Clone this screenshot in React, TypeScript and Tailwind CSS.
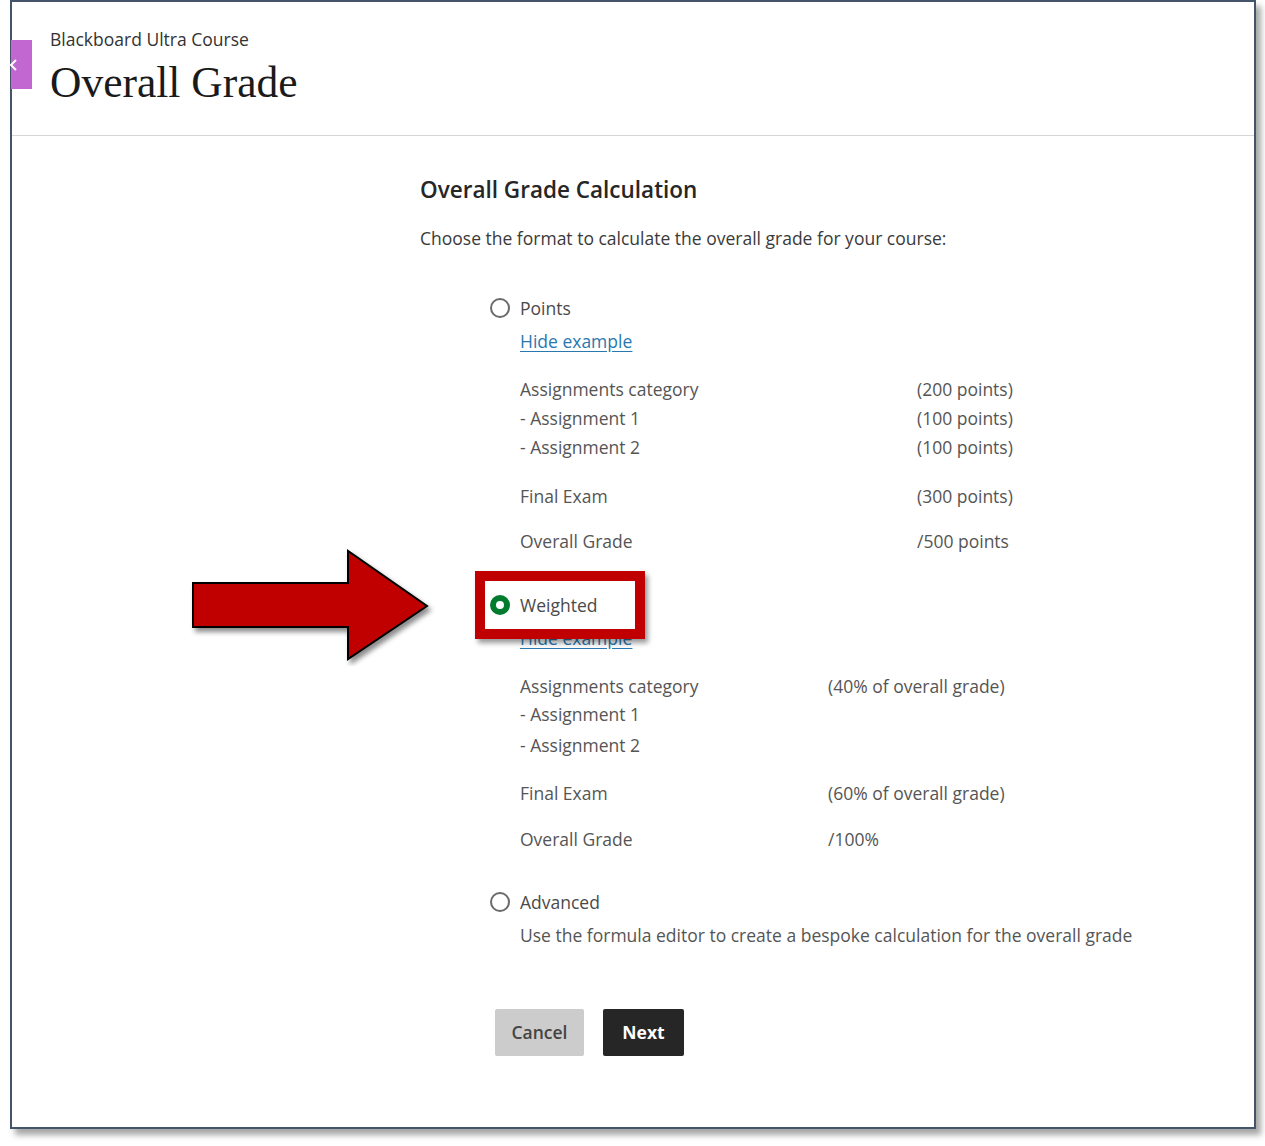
import React from "react";

const sans = "font-['Open_Sans','Noto_Sans',sans-serif]";

function Radio({ checked }: { checked?: boolean }) {
  if (checked) {
    return (
      <span className="inline-block w-[20px] h-[20px] rounded-full border-[6px] border-[#037b2f] bg-white box-border" />
    );
  }
  return (
    <span className="inline-block w-[20px] h-[20px] rounded-full border-2 border-[#6b6b6b] bg-white box-border" />
  );
}

function Row({ left, right, rightX, className = "" }: { left: string; right?: string; rightX: string; className?: string }) {
  return (
    <div className={`flex h-[28px] items-center ${className}`}>
      <span className={`${rightX} shrink-0`}>{left}</span>
      {right && <span>{right}</span>}
    </div>
  );
}

export default function App() {
  return (
    <div className={`${sans} bg-white w-[1265px] h-[1146px] pl-[10px]`}>
      <div className="relative w-[1246px] h-[1129px] border-2 border-[#44546a] bg-white shadow-[5px_6px_6px_rgba(0,0,0,0.35)]">
        {/* header */}
        <div className="h-[134px] border-b border-[#d6d6d6] flex">
          <div className="w-[21px] h-[49px] mt-[38px] -ml-[1px] bg-[#c266d1] flex items-center">
            <svg width="8" height="14" viewBox="0 0 8 14" className="ml-[-1px]">
              <path d="M6 2 L1 7 L6 12" stroke="#fff" strokeWidth="2" fill="none" />
            </svg>
          </div>
          <div className="ml-[18px]">
            <div className="mt-[26px] text-[17.5px] leading-[22px] text-[#333]">Blackboard Ultra Course</div>
            <div className="mt-[8px] text-[43.5px] leading-[48px] text-[#1a1a1a] font-['Liberation_Serif','Noto_Serif',serif]">
              Overall Grade
            </div>
          </div>
        </div>

        {/* body */}
        <div className="pl-[408px] text-[#333] text-[17.5px]">
          <div className="mt-[39px] text-[22.5px] leading-[30px] font-semibold text-[#262626]">Overall Grade Calculation</div>
          <div className="mt-[20px] leading-[26px] text-[#3a3a3a]">
            Choose the format to calculate the overall grade for your course:
          </div>

          {/* Points */}
          <div className="ml-[70px] mt-[44px]">
            <div className="flex items-center h-[26px] gap-[10px]">
              <Radio />
              <span className="text-[#4a4a4a]">Points</span>
            </div>
            <div className="ml-[30px] text-[#555]">
              <div className="mt-[7px] h-[26px] leading-[26px] text-[#2a78b0] underline underline-offset-[3px]">
                <a href="#">Hide example</a>
              </div>
              <div className="mt-[21px]">
                <Row left="Assignments category" right="(200 points)" rightX="w-[397px]" />
                <Row left="- Assignment 1" right="(100 points)" rightX="w-[397px]" className="mt-[1px]" />
                <Row left="- Assignment 2" right="(100 points)" rightX="w-[397px]" className="mt-[1px]" />
                <Row left="Final Exam" right="(300 points)" rightX="w-[397px]" className="mt-[21px]" />
                <Row left="Overall Grade" right="/500 points" rightX="w-[397px]" className="mt-[17px]" />
              </div>
            </div>

            {/* Weighted */}
            <div className="flex items-center h-[26px] gap-[10px] mt-[37px]">
              <Radio checked />
              <span className="text-[#4a4a4a]">Weighted</span>
            </div>
            <div className="ml-[30px] text-[#555]">
              <div className="mt-[7px] h-[26px] leading-[26px] text-[#2a78b0] underline underline-offset-[3px]">
                <a href="#">Hide example</a>
              </div>
              <div className="mt-[21px]">
                <Row left="Assignments category" right="(40% of overall grade)" rightX="w-[308px]" />
                <Row left="- Assignment 1" rightX="w-[308px]" />
                <Row left="- Assignment 2" rightX="w-[308px]" className="mt-[3px]" />
                <Row left="Final Exam" right="(60% of overall grade)" rightX="w-[308px]" className="mt-[20px]" />
                <Row left="Overall Grade" right="/100%" rightX="w-[308px]" className="mt-[18px]" />
              </div>
            </div>

            {/* Advanced */}
            <div className="flex items-center h-[26px] gap-[10px] mt-[36px]">
              <Radio />
              <span className="text-[#4a4a4a]">Advanced</span>
            </div>
            <div className="ml-[30px] mt-[7px] h-[26px] leading-[26px] text-[#555] whitespace-nowrap">
              Use the formula editor to create a bespoke calculation for the overall grade
            </div>
          </div>

          {/* Buttons */}
          <div className="ml-[75px] mt-[61px] flex gap-[19px]">
            <button className="w-[89px] h-[47px] rounded-[2px] bg-[#cccccc] text-[#444] text-[17.5px] font-semibold">
              Cancel
            </button>
            <button className="w-[81px] h-[47px] rounded-[2px] bg-[#262626] text-white text-[17.5px] font-bold">
              Next
            </button>
          </div>
        </div>

        {/* annotation: red box */}
        <div className="absolute left-[463px] top-[569px] w-[170px] h-[68px] border-[10px] border-[#c00000] shadow-[3px_4px_5px_rgba(0,0,0,0.4)]" />

        {/* annotation: arrow */}
        <svg className="absolute left-[176px] top-[544px]" width="260" height="120" viewBox="0 0 260 120">
          <defs>
            <filter id="sh" x="-10%" y="-10%" width="130%" height="130%">
              <feDropShadow dx="3" dy="4" stdDeviation="2.5" floodColor="#000" floodOpacity="0.45" />
            </filter>
          </defs>
          <path
            d="M5 37 L160 37 L160 5 L239 60 L160 113 L160 81 L5 81 Z"
            fill="#c00000"
            stroke="#000"
            strokeWidth="2"
            strokeLinejoin="miter"
            filter="url(#sh)"
          />
        </svg>
      </div>
    </div>
  );
}
